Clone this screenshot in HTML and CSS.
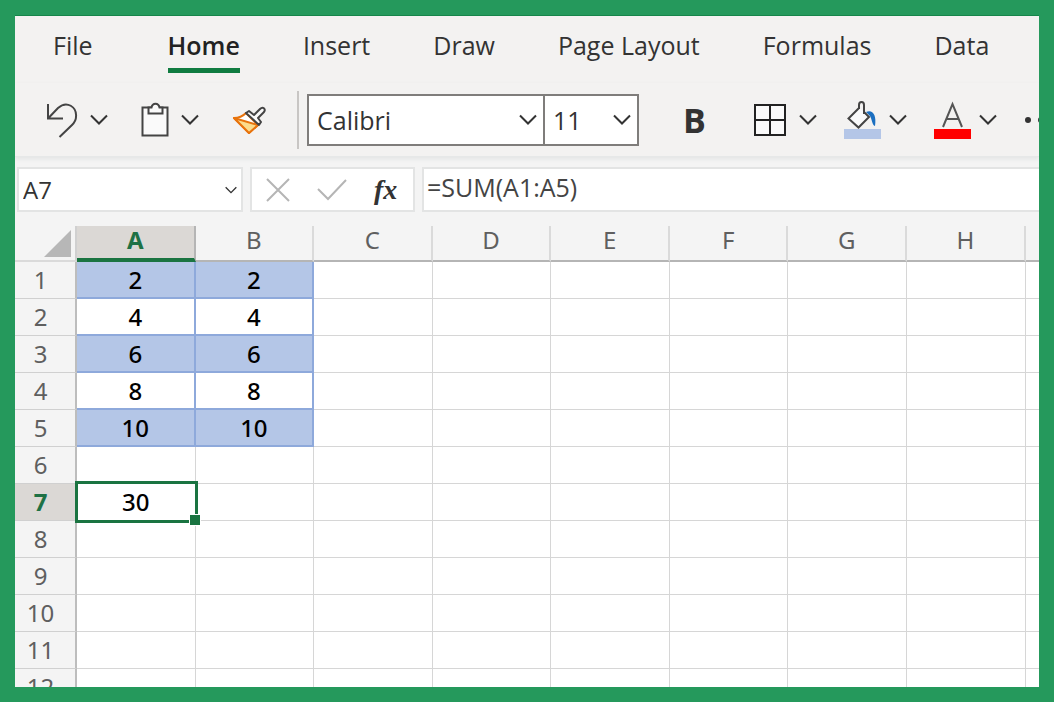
FILE: index.html
```html
<!DOCTYPE html>
<html lang="en">
<head>
<meta charset="utf-8">
<title>Spreadsheet</title>
<link rel="stylesheet" href="styles.css">
</head>
<body>
<svg class="defs" aria-hidden="true">
  <symbol id="chevron" viewBox="0 0 18 11"><path d="M1 1.5l8 8 8-8" fill="none" stroke="#333" stroke-width="2"/></symbol>
</svg>
<main class="app">
  <nav class="tabs" aria-label="Ribbon">
    <a class="tab tab-file" href="#file">File</a>
    <a class="tab tab-active" href="#home" aria-current="page">Home</a>
    <a class="tab" href="#insert">Insert</a>
    <a class="tab" href="#draw">Draw</a>
    <a class="tab" href="#layout">Page Layout</a>
    <a class="tab" href="#formulas">Formulas</a>
    <a class="tab" href="#data">Data</a>
  </nav>
  <div class="ribbon">
    <div class="group group-edit">
      <button class="tool" type="button" aria-label="Undo">
        <svg width="32" height="36" viewBox="0 0 32 36"><path d="M2 2v14.500h15M2.500 16L12 6C21-2 31 5 30 15c0 3-2 6-4 8L13.500 35" fill="none" stroke="#444" stroke-width="2"/></svg>
        <svg class="chevron"><use href="#chevron"/></svg>
      </button>
      <button class="tool" type="button" aria-label="Paste">
        <svg width="28" height="36" viewBox="0 0 28 36"><path d="M1.500 5.500h25v28h-25z" fill="#fafafa" stroke="#444" stroke-width="2"/><path d="M7.500 11.500v-6h3c1-5 7-5 8 0h3v6z" fill="#fafafa" stroke="#444" stroke-width="2"/></svg>
        <svg class="chevron"><use href="#chevron"/></svg>
      </button>
      <button class="tool" type="button" aria-label="Format painter">
        <svg width="34" height="30" viewBox="0 0 34 30"><path d="M2 13c5 0 9-2 12-5l12 12-9 8z" fill="#fff" stroke="#e8730c" stroke-width="2" stroke-linejoin="round"/><path d="M2 13l24 7-9 8z" fill="#fcdc8c" stroke="#e8730c" stroke-width="2" stroke-linejoin="round"/><path d="M14 8l3-2 5 4 6-6c3-3 6 0 4 3l-6 6 3 4-2 3z" fill="#fafafa" stroke="#444" stroke-width="2" stroke-linejoin="round"/></svg>
      </button>
    </div>
    <div class="fonts">
      <label class="picker picker-name">
        <select aria-label="Font"><option>Calibri</option></select>
        <svg class="chevron"><use href="#chevron"/></svg>
      </label>
      <label class="picker picker-size">
        <select aria-label="Font size"><option>11</option></select>
        <svg class="chevron"><use href="#chevron"/></svg>
      </label>
    </div>
    <button class="tool bold" type="button" aria-label="Bold">B</button>
    <div class="group group-format">
      <button class="tool" type="button" aria-label="Borders">
        <svg width="34" height="34" viewBox="0 0 34 34"><path d="M2 2h30v30H2zM17 2v30M2 17h30" fill="#fafafa" stroke="#222" stroke-width="2"/></svg>
        <svg class="chevron"><use href="#chevron"/></svg>
      </button>
      <button class="tool tool-color" type="button" aria-label="Fill color">
        <svg width="38" height="38" viewBox="0 0 38 38"><path d="M23 11c6-3 11 2 9 14-3-1-3-7-5-10z" fill="#1b6fc0"/><path d="M16 7L5.500 17.500l10 9L26 16l-5-5" fill="#fafafa" stroke="#444" stroke-width="2"/><path d="M16 8V4c0-4 5-4 5 0v9" fill="none" stroke="#444" stroke-width="2"/><path d="M1 28h37v10H1z" fill="#b4c6e7"/></svg>
        <svg class="chevron"><use href="#chevron"/></svg>
      </button>
      <button class="tool tool-color" type="button" aria-label="Font color">
        <svg width="38" height="38" viewBox="0 0 38 38"><path d="M10 26L19.500 3 29 26M13.500 18h12" fill="none" stroke="#555" stroke-width="2"/><path d="M1 28h37v10H1z" fill="#f00"/></svg>
        <svg class="chevron"><use href="#chevron"/></svg>
      </button>
    </div>
    <button class="tool more" type="button" aria-label="More">
      <svg width="24" height="6" viewBox="0 0 24 6"><circle cx="3" cy="3" r="3" fill="#333"/><circle cx="16" cy="3" r="3" fill="#333"/></svg>
    </button>
  </div>
  <div class="formula-bar">
    <label class="name-box">
      <input type="text" aria-label="Name box" value="A7">
      <svg class="chevron chevron-small"><use href="#chevron"/></svg>
    </label>
    <div class="formula-tools">
      <button class="tool" type="button" aria-label="Cancel"><svg width="24" height="24" viewBox="0 0 24 24"><path d="M1 1l22 22M23 1L1 23" stroke="#b5b5b5" stroke-width="2"/></svg></button>
      <button class="tool" type="button" aria-label="Enter"><svg width="30" height="22" viewBox="0 0 30 22"><path d="M1 10l10 10L29 1" fill="none" stroke="#b5b5b5" stroke-width="2"/></svg></button>
      <button class="tool fx" type="button" aria-label="Insert function">fx</button>
    </div>
    <input class="formula" type="text" aria-label="Formula" value="=SUM(A1:A5)">
  </div>
  <table class="sheet">
    <colgroup><col class="col-head"><col class="col" span="8"><col></colgroup>
    <thead>
      <tr><th class="corner" aria-label="Select all"><svg width="27" height="27" viewBox="0 0 27 27"><path d="M27 0v27H0z" fill="#b7b7b7"/></svg></th><th class="current">A</th><th>B</th><th>C</th><th>D</th><th>E</th><th>F</th><th>G</th><th>H</th><th></th></tr>
    </thead>
    <tbody>
      <tr><th>1</th><td class="band">2</td><td class="band">2</td><td></td><td></td><td></td><td></td><td></td><td></td><td></td></tr>
      <tr><th>2</th><td class="plain">4</td><td class="plain">4</td><td></td><td></td><td></td><td></td><td></td><td></td><td></td></tr>
      <tr><th>3</th><td class="band">6</td><td class="band">6</td><td></td><td></td><td></td><td></td><td></td><td></td><td></td></tr>
      <tr><th>4</th><td class="plain">8</td><td class="plain">8</td><td></td><td></td><td></td><td></td><td></td><td></td><td></td></tr>
      <tr><th>5</th><td class="band">10</td><td class="band">10</td><td></td><td></td><td></td><td></td><td></td><td></td><td></td></tr>
      <tr><th>6</th><td></td><td></td><td></td><td></td><td></td><td></td><td></td><td></td><td></td></tr>
      <tr><th class="current">7</th><td class="selected">30</td><td></td><td></td><td></td><td></td><td></td><td></td><td></td><td></td></tr>
      <tr><th>8</th><td></td><td></td><td></td><td></td><td></td><td></td><td></td><td></td><td></td></tr>
      <tr><th>9</th><td></td><td></td><td></td><td></td><td></td><td></td><td></td><td></td><td></td></tr>
      <tr><th>10</th><td></td><td></td><td></td><td></td><td></td><td></td><td></td><td></td><td></td></tr>
      <tr><th>11</th><td></td><td></td><td></td><td></td><td></td><td></td><td></td><td></td><td></td></tr>
      <tr><th>12</th><td></td><td></td><td></td><td></td><td></td><td></td><td></td><td></td><td></td></tr>
    </tbody>
  </table>
</main>
</body>
</html>
```
FILE: styles.css
```css
* { box-sizing: border-box; }

body {
  margin: 0;
  height: 100vh;
  padding: 15px;
  background: #25995c;
  font: 25px/36px "Open Sans", "Noto Sans", sans-serif;
  color: #333;
}

input, select, button { font: inherit; color: inherit; }

.defs { position: absolute; width: 0; height: 0; }

.app {
  height: 100%;
  overflow: hidden;
  background: #f4f4f4;
  border-top: 1px solid #16854a;
}

.tabs {
  display: flex;
  gap: 63px;
  padding: 11px 38px 0;
  height: 67px;
  background: #f3f2f1;
  white-space: nowrap;
}

.tab { color: #333; text-decoration: none; height: 46px; }
.tab-file { margin-right: 12px; }
.tab-active { font-weight: 600; color: #222; border-bottom: 5px solid #107c41; }

.ribbon {
  display: flex;
  align-items: center;
  height: 74px;
  padding: 0 0 0 31px;
  background: #f3f2f1;
  border-bottom: 1px solid #e6e8e8;
  box-shadow: 0 2px 4px #e2e4e4;
  overflow: hidden;
}

.group { display: flex; align-items: center; }
.group-edit {
  gap: 33px;
  height: 58px;
  padding-right: 31px;
  margin-right: 8px;
  border-right: 2px solid #c8c6c4;
}
.group-format { gap: 26px; }

.tool {
  display: flex;
  align-items: center;
  gap: 12px;
  flex: none;
  padding: 0;
  border: 0;
  background: none;
}
.tool-color { gap: 8px; }

.chevron { width: 18px; height: 11px; flex: none; pointer-events: none; }
.chevron-small { width: 12px; height: 8px; }

.fonts { display: flex; border: 2px solid #7f7d7b; }
.picker { display: grid; align-items: center; height: 48px; background: #fff; }
.picker > * { grid-area: 1 / 1; }
.picker .chevron { justify-self: end; margin-right: 6px; }
.picker select {
  appearance: none;
  width: 100%;
  height: 100%;
  padding: 0 8px;
  border: 0;
  background: none;
}
.picker-name { width: 234px; }
.picker-size { width: 94px; border-left: 2px solid #7f7d7b; }

.bold { margin: 0 47px 0 44px; font-size: 34px; font-weight: 700; }
.more { margin-left: 28px; }

.formula-bar {
  display: flex;
  gap: 7px;
  height: 69px;
  padding: 10px 0 14px 2px;
}

.name-box, .formula-tools, .formula {
  border: 2px solid #e3e4e4;
  background: #fff;
}
.name-box { display: flex; align-items: center; width: 226px; padding: 0 4px; flex: none; }
.name-box input { flex: 1; min-width: 0; padding: 0; border: 0; background: none; font-size: 24px; }
.formula-tools { display: flex; align-items: center; gap: 27px; width: 165px; padding-left: 14px; flex: none; }
.fx { font: italic 600 28px "Liberation Serif", serif; }
.formula { flex: 1; min-width: 0; padding: 0 3px 6px; border-right: 0; color: #444; }

.sheet {
  width: 100%;
  table-layout: fixed;
  border-collapse: separate;
  border-spacing: 0;
  font: 24px/36px "Noto Sans", "Open Sans", sans-serif;
  text-align: center;
}
.col-head { width: 62px; }
.col { width: 11.58%; }

th { padding: 0; font-weight: 400; color: #5f5f5f; }
thead th {
  height: 36px;
  line-height: 28px;
  padding-bottom: 6px;
  border-right: 2px solid #dadada;
  border-bottom: 2px solid #b5b5b5;
}
thead .corner { line-height: 0; text-align: right; padding: 0 4px 0 0; border-right-color: #d0d0d0; border-bottom-color: #dadada; }
thead .current { border-bottom: 4px solid #1a7441; padding-bottom: 4px; border-right-color: #b5b5b5; }
.current { background: #dbd8d5; color: #1e7145; font-weight: 700; }

tbody th {
  height: 37px;
  padding-right: 9px;
  border-right: 2px solid #bdbdbd;
  border-bottom: 1px solid #d0d0d0;
}
td {
  height: 37px;
  padding: 0;
  background: #fff;
  border-right: 1px solid #d6d6d6;
  border-bottom: 1px solid #d6d6d6;
  color: #000;
  font-weight: 500;
}
.band, .plain { border-right: 2px solid #8ea9db; border-bottom: 2px solid #8ea9db; line-height: 35px; }
.band { background: #b4c6e7; }
th:last-child, td:last-child { border-right: 0; }

.selected { position: relative; }
.selected::before {
  content: "";
  position: absolute;
  inset: -3px -3px -3px -2px;
  border: 3px solid #1a7441;
}
.selected::after {
  content: "";
  position: absolute;
  right: -6px;
  bottom: -6px;
  width: 10px;
  height: 10px;
  border: 1px solid #fff;
  background: #1a7441;
}
```
